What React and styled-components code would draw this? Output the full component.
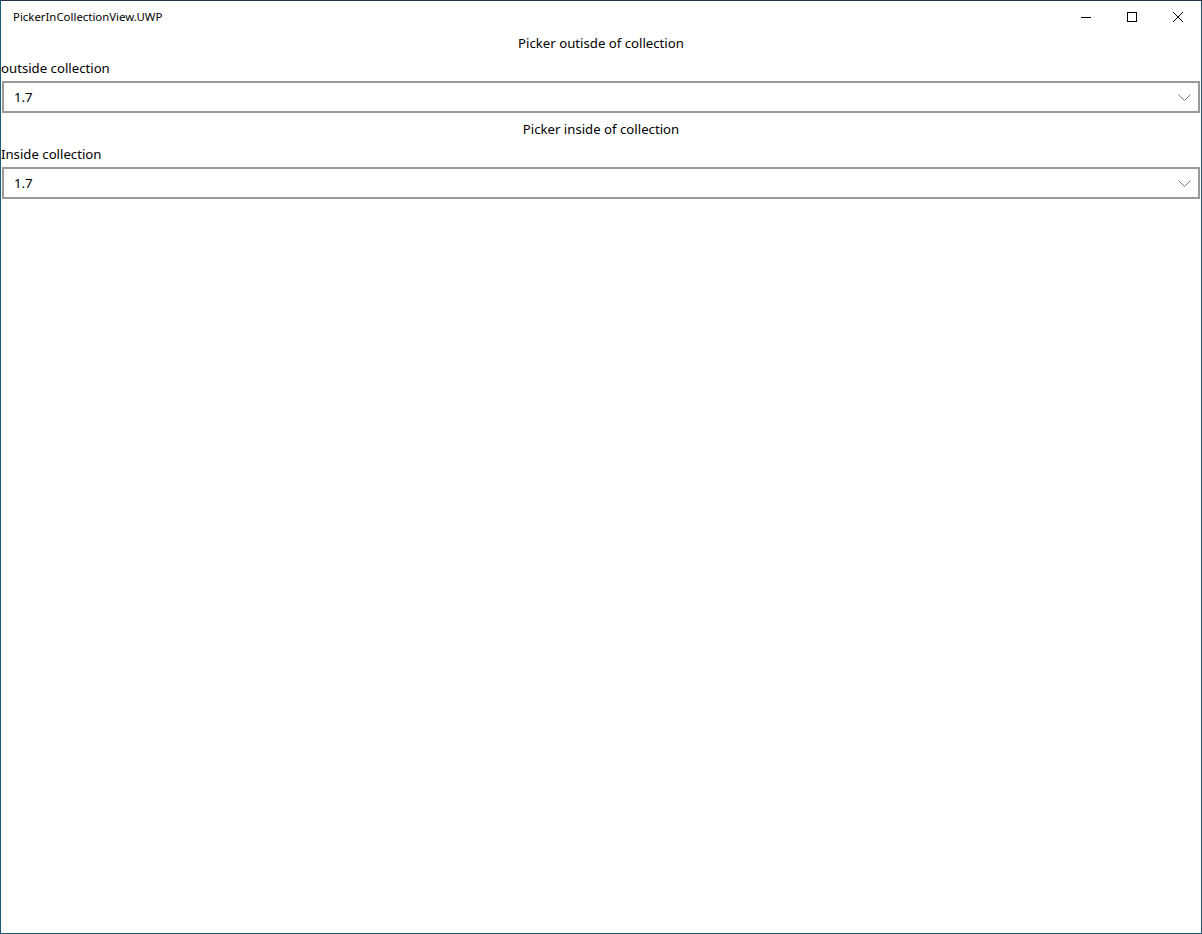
import React from "react";
import styled, { createGlobalStyle } from "styled-components";

const GlobalStyle = createGlobalStyle`
  html, body {
    margin: 0;
    padding: 0;
    background: #ffffff;
  }
  body {
    font-family: "Segoe UI", "Noto Sans", sans-serif;
    color: #000;
  }
`;

const Window = styled.div`
  box-sizing: border-box;
  width: 1202px;
  height: 934px;
  border: 1px solid #1a5b78;
  border-top-color: #24364a;
  background: #fff;
  display: flex;
  flex-direction: column;
  overflow: hidden;
`;

const TitleBar = styled.div`
  height: 31px;
  display: flex;
  align-items: center;
  flex-shrink: 0;
`;

const TitleText = styled.div`
  flex: 1;
  padding-left: 12px;
  font-size: 11.4px;
  line-height: 16px;
  color: #000;
`;

const Caption = styled.div`
  width: 46px;
  height: 31px;
  display: flex;
  align-items: center;
  justify-content: center;
`;

const Content = styled.div`
  display: flex;
  flex-direction: column;
  padding-top: 1px;
`;

const Heading = styled.div`
  text-align: center;
  font-size: 13.2px;
  line-height: 20px;
  height: 20px;
  margin-top: ${(p) => p.$gap}px;
`;

const Label = styled.div`
  font-size: 13.2px;
  line-height: 20px;
  height: 20px;
  margin-top: 5px;
`;

const Picker = styled.div`
  box-sizing: border-box;
  margin: 3px 1px 0 1px;
  height: 32px;
  border: 2px solid #999999;
  display: flex;
  align-items: center;
  padding: 0 7px 0 10px;
`;

const PickerValue = styled.span`
  flex: 1;
  font-size: 13.2px;
  line-height: 20px;
`;

const Chevron = () => (
  <svg width="13" height="7" viewBox="0 0 13 7">
    <path d="M0.5 0.5 L6.5 6.5 L12.5 0.5" fill="none" stroke="#7a7a7a" strokeWidth="1" />
  </svg>
);

const Section = ({ title, label, value, gap }) => (
  <>
    <Heading $gap={gap}>{title}</Heading>
    <Label>{label}</Label>
    <Picker>
      <PickerValue>{value}</PickerValue>
      <Chevron />
    </Picker>
  </>
);

export default function App() {
  return (
    <>
      <GlobalStyle />
      <Window>
        <TitleBar>
          <TitleText>PickerInCollectionView.UWP</TitleText>
          <Caption>
            <svg width="10" height="10" viewBox="0 0 10 10">
              <path d="M0 5.5 H10" stroke="#000" strokeWidth="1" />
            </svg>
          </Caption>
          <Caption>
            <svg width="10" height="10" viewBox="0 0 10 10">
              <rect x="0.5" y="0.5" width="9" height="9" fill="none" stroke="#000" strokeWidth="1" />
            </svg>
          </Caption>
          <Caption>
            <svg width="10" height="10" viewBox="0 0 10 10">
              <path d="M0 0 L10 10 M10 0 L0 10" stroke="#000" strokeWidth="1" />
            </svg>
          </Caption>
        </TitleBar>
        <Content>
          <Section title="Picker outisde of collection" label="outside collection" value="1.7" gap={0} />
          <Section title="Picker inside of collection" label="Inside collection" value="1.7" gap={6} />
        </Content>
      </Window>
    </>
  );
}
